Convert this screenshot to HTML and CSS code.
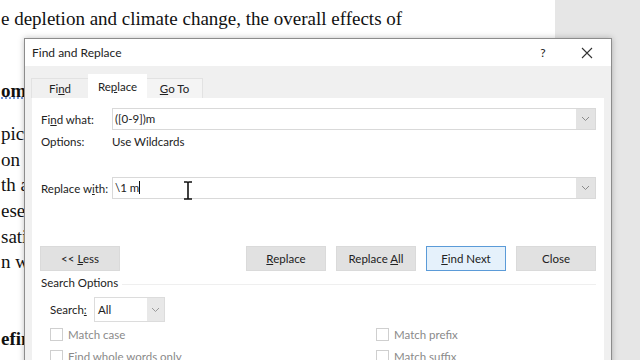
FILE: index.html
```html
<!DOCTYPE html>
<html lang="en">
<head>
    <meta charset="UTF-8">
    <meta name="viewport" content="width=device-width, initial-scale=1.0">
    <link rel="stylesheet" href="styles.css">
    <title>Find and Replace</title>
</head>
<body>

    <div class="workspace">
        <div class="page">
            <p class="line first">e depletion and climate change, the overall effects of</p>
            <p class="line heading">om <span class="hidden">perspective</span></p>
            <p class="line body1">pic is considered from a broad range of views</p>
            <p class="line">on and the possible results that it may bring</p>
            <p class="line">th a clear understanding of the problem</p>
            <p class="line">ese questions are explored in what follows</p>
            <p class="line">sation of the main findings of the study</p>
            <p class="line">n with respect to future research</p>
            <p class="line heading2">efinitions</p>
        </div>
    </div>

    <div class="dialog">
        <div class="titlebar">
            <span class="title">Find and Replace</span>
            <span class="help">?</span>
            <span class="close-x">
                <svg width="12" height="12" viewBox="0 0 12 12"><path d="M1 1 L11 11 M11 1 L1 11" stroke="#333" stroke-width="1.1" fill="none"/></svg>
            </span>
        </div>

        <div class="dialog-body">
            <div class="tabs">
                <div class="tab tab-find">Fi<u>n</u>d</div>
                <div class="tab active">Re<u>p</u>lace</div>
                <div class="tab tab-goto"><u>G</u>o To</div>
            </div>

            <div class="panel">
                <div class="field-row">
                    <label class="field-label">Fi<u>n</u>d what:</label>
                    <div class="combo">
                        <span class="combo-text">([0-9])m</span>
                        <span class="combo-btn"><svg width="9" height="6" viewBox="0 0 9 6"><path d="M1 1 L4.5 4.5 L8 1" stroke="#8a8a8a" fill="none"/></svg></span>
                    </div>
                </div>

                <div class="options-row">
                    <span class="field-label">Options:</span>
                    <span>Use Wildcards</span>
                </div>

                <div class="field-row replace-row">
                    <label class="field-label">Replace w<u>i</u>th:</label>
                    <div class="combo">
                        <span class="combo-text">\1 m<span class="caret"></span></span>
                        <span class="combo-btn"><svg width="9" height="6" viewBox="0 0 9 6"><path d="M1 1 L4.5 4.5 L8 1" stroke="#8a8a8a" fill="none"/></svg></span>
                    </div>
                    <svg class="ibeam" width="10" height="19" viewBox="0 0 10 19">
                        <path d="M1 1 H4 Q5 1 5 2 Q5 1 6 1 H9 M5 2 V17 M1 18 H4 Q5 18 5 17 Q5 18 6 18 H9" stroke="#111" stroke-width="1.6" fill="none"/>
                    </svg>
                </div>

                <div class="button-row">
                    <button class="btn">&lt;&lt; <u>L</u>ess</button>
                    <div class="spacer"></div>
                    <button class="btn"><u>R</u>eplace</button>
                    <button class="btn">Replace <u>A</u>ll</button>
                    <button class="btn default"><u>F</u>ind Next</button>
                    <button class="btn">Close</button>
                </div>

                <div class="group-title">
                    <span>Search Options</span>
                    <div class="group-line"></div>
                </div>

                <div class="search-row">
                    <span>Search<u>:</u></span>
                    <div class="select">
                        <span class="select-text">All</span>
                        <span class="select-btn"><svg width="9" height="6" viewBox="0 0 9 6"><path d="M1 1 L4.5 4.5 L8 1" stroke="#9a9a9a" fill="none"/></svg></span>
                    </div>
                </div>

                <div class="checks">
                    <div class="check-col">
                        <div class="check"><span class="box"></span>Match case</div>
                        <div class="check"><span class="box"></span>Find whole words only</div>
                    </div>
                    <div class="check-col right">
                        <div class="check"><span class="box"></span>Match prefix</div>
                        <div class="check"><span class="box"></span>Match suffix</div>
                    </div>
                </div>
            </div>
        </div>
    </div>

</body>
</html>
```

FILE: styles.css
```css
body {
    margin: 0;
    width: 640px;
    height: 360px;
    overflow: hidden;
    background-color: #e6e6e6;
    font-family: Lato, "Noto Sans", sans-serif;
    position: relative;
}

.workspace {
    height: 360px;
}

.page {
    width: 555px;
    height: 360px;
    background-color: #fff;
    font-family: "Liberation Serif", serif;
    font-size: 19px;
    color: #111;
    overflow: hidden;
}

.line {
    margin: 0;
    height: 25.6px;
    line-height: 25.6px;
    white-space: nowrap;
    padding-left: 1px;
}

.first {
    margin-top: 6px;
}

.heading {
    margin-top: 46px;
    font-weight: bold;
    text-decoration: underline dotted #6b8fd6;
}

.hidden {
    visibility: hidden;
}

.body1 {
    margin-top: 18px;
}

.heading2 {
    margin-top: 51px;
    font-weight: bold;
}

/* dialog window */
.dialog {
    position: absolute;
    left: 24px;
    top: 38px;
    width: 586px;
    height: 340px;
    border: 1px solid #8c8c8c;
    background-color: #f0f0f0;
    box-shadow: 0 0 6px rgba(0, 0, 0, 0.25);
    font-size: 11.5px;
    color: #222;
    overflow: hidden;
}

.titlebar {
    height: 27px;
    background-color: #fff;
    display: flex;
    align-items: center;
    padding-left: 7px;
}

.title {
    font-size: 12px;
    flex: 1;
}

.help {
    width: 20px;
    font-size: 12px;
    margin-right: 28px;
    text-align: center;
}

.close-x {
    width: 12px;
    margin-right: 18px;
    display: flex;
}

.dialog-body {
    padding: 8px 7px 0 7px;
}

.tabs {
    display: flex;
    align-items: flex-end;
    height: 24px;
    margin-left: -1px;
}

.tab {
    height: 20px;
    line-height: 20px;
    text-align: center;
    background-color: #f0f0f0;
    border: 1px solid #e2e2e2;
    border-bottom: none;
    box-sizing: border-box;
}

.tab-find {
    width: 57px;
    border-right: none;
}

.tab-goto {
    width: 56px;
    border-left: none;
    background-color: #f4f4f4;
}

.tab.active {
    width: 59px;
    height: 24px;
    line-height: 24px;
    background-color: #fff;
    border-color: #fff;
}

.panel {
    background-color: #fff;
    height: 270px;
    padding: 10px 8px 0 9px;
}

.field-row {
    display: flex;
    align-items: center;
    position: relative;
}

.field-label {
    width: 71px;
    flex: none;
    white-space: nowrap;
}

.combo {
    flex: 1;
    height: 22px;
    display: flex;
    border: 1px solid #d9d9d9;
    box-sizing: border-box;
}

.combo-text {
    flex: 1;
    line-height: 20px;
    padding-left: 2px;
    position: relative;
}

.caret {
    display: inline-block;
    width: 1px;
    height: 13px;
    background-color: #111;
    vertical-align: -2px;
}

.combo-btn {
    width: 19px;
    background-color: #e3e3e3;
    display: flex;
    align-items: center;
    justify-content: center;
}

.options-row {
    display: flex;
    margin-top: 4px;
    height: 16px;
    line-height: 16px;
}

.replace-row {
    margin-top: 27px;
}

.ibeam {
    position: absolute;
    left: 142px;
    top: 4px;
}

.button-row {
    display: flex;
    gap: 10px;
    margin-top: 47px;
    margin-left: -1px;
}

.spacer {
    flex: 1;
}

.btn {
    width: 80px;
    height: 25px;
    background-color: #e1e1e1;
    border: 1px solid #dadada;
    font-family: Lato, "Noto Sans", sans-serif;
    font-size: 11.5px;
    color: #222;
    padding: 0;
}

.btn.default {
    background-color: #e5f1fb;
    border-color: #5b9bd8;
}

.group-title {
    display: flex;
    align-items: center;
    margin-top: 4px;
    height: 16px;
    line-height: 16px;
}

.group-line {
    flex: 1;
    height: 1px;
    background-color: #efefef;
    margin-left: 4px;
    margin-top: 2px;
}

.search-row {
    display: flex;
    align-items: center;
    margin-top: 6px;
    padding-left: 9px;
}

.search-row > span {
    width: 44px;
}

.select {
    width: 71px;
    height: 25px;
    border: 1px solid #dcdcdc;
    box-sizing: border-box;
    display: flex;
}

.select-text {
    flex: 1;
    line-height: 23px;
    padding-left: 3px;
}

.select-btn {
    width: 17px;
    background-color: #e8e8e8;
    display: flex;
    align-items: center;
    justify-content: center;
}

.checks {
    display: flex;
    margin-top: 1px;
    padding-left: 9px;
}

.check-col {
    width: 326px;
    flex: none;
}

.check {
    display: flex;
    align-items: center;
    height: 22px;
    color: #8a8a8a;
}

.box {
    width: 13px;
    height: 13px;
    border: 1px solid #cfcfcf;
    box-sizing: border-box;
    margin-right: 5px;
}
```
